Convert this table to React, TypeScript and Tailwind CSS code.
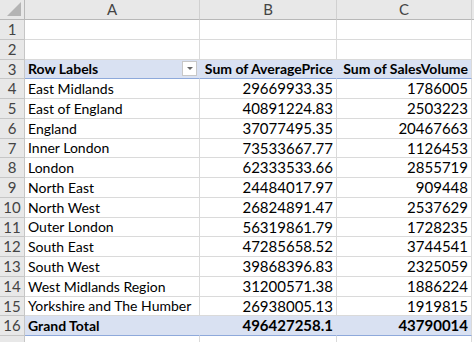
import React from 'react';

const rows: [string, string, string][] = [
  ['East Midlands', '29669933.35', '1786005'],
  ['East of England', '40891224.83', '2503223'],
  ['England', '37077495.35', '20467663'],
  ['Inner London', '73533667.77', '1126453'],
  ['London', '62333533.66', '2855719'],
  ['North East', '24484017.97', '909448'],
  ['North West', '26824891.47', '2537629'],
  ['Outer London', '56319861.79', '1728235'],
  ['South East', '47285658.52', '3744541'],
  ['South West', '39868396.83', '2325059'],
  ['West Midlands Region', '31200571.38', '1886224'],
  ['Yorkshire and The Humber', '26938005.13', '1919815'],
];

const font = { fontFamily: 'Lato, "Open Sans", sans-serif' };

function RowNum({ n }: { n?: number }) {
  return (
    <div className="flex items-center justify-center bg-[#e8e8e8] border-r border-b border-[#c6c6c6] text-[#444] text-[15px]">
      {n}
    </div>
  );
}

function Cell({ children, className = '' }: { children?: React.ReactNode; className?: string }) {
  return (
    <div className={`flex items-center border-r border-b border-[#dadada] px-[3px] text-[14px] text-black whitespace-nowrap overflow-hidden ${className}`}>
      {children}
    </div>
  );
}

const num = 'justify-end text-[15px] tabular-nums';
const pivot = 'bg-[#d9e1f2] border-b-[#8ea9db] font-bold';

export default function App() {
  return (
    <div className="w-[474px] h-[342px] overflow-hidden bg-white" style={font}>
      <div className="grid grid-cols-[25px_175px_137px_135px_2px] grid-rows-[20px_repeat(17,19.75px)]">
        {/* column headers */}
        <div className="relative bg-[#e8e8e8] border-r border-b border-[#b8b8b8]">
          <div className="absolute right-[3px] bottom-[3px] w-0 h-0 border-l-[14px] border-l-transparent border-b-[14px] border-b-[#b4b4b4]" />
        </div>
        {['A', 'B', 'C'].map((c) => (
          <div key={c} className="flex items-center justify-center bg-[#e8e8e8] border-r border-b border-[#b8b8b8] border-r-[#d0d0d0] text-[#444] text-[15px]">
            {c}
          </div>
        ))}
        <div className="bg-[#e8e8e8] border-b border-[#b8b8b8]" />

        {/* rows 1-2 */}
        {[1, 2].map((n) => (
          <React.Fragment key={n}>
            <RowNum n={n} />
            <Cell />
            <Cell />
            <Cell />
            <div />
          </React.Fragment>
        ))}

        {/* row 3: pivot header */}
        <RowNum n={3} />
        <Cell className={`${pivot} border-r-[#d9e1f2] justify-between pr-[2px]`}>
          <span>Row Labels</span>
          <span className="flex items-center justify-center w-[15px] h-[15px] bg-white border border-[#c8c8c8]">
            <span className="w-0 h-0 border-l-[3px] border-r-[3px] border-t-[3px] border-l-transparent border-r-transparent border-t-[#666]" />
          </span>
        </Cell>
        <Cell className={`${pivot} border-r-[#d9e1f2] justify-end`}>Sum of AveragePrice</Cell>
        <Cell className={`${pivot} border-r-[#dadada] justify-end`}>Sum of SalesVolume</Cell>
        <div />

        {rows.map(([label, price, vol], i) => (
          <React.Fragment key={label}>
            <RowNum n={i + 4} />
            <Cell>{label}</Cell>
            <Cell className={num}>{price}</Cell>
            <Cell className={num}>{vol}</Cell>
            <div />
          </React.Fragment>
        ))}

        {/* row 16: grand total */}
        <RowNum n={16} />
        <Cell className={`${pivot} border-r-[#d9e1f2]`}>Grand Total</Cell>
        <Cell className={`${pivot} border-r-[#d9e1f2] ${num}`}>496427258.1</Cell>
        <Cell className={`${pivot} border-r-[#dadada] ${num}`}>43790014</Cell>
        <div />

        {/* sliver of row 17 */}
        <RowNum />
        <Cell />
        <Cell />
        <Cell />
        <div />
      </div>
    </div>
  );
}
